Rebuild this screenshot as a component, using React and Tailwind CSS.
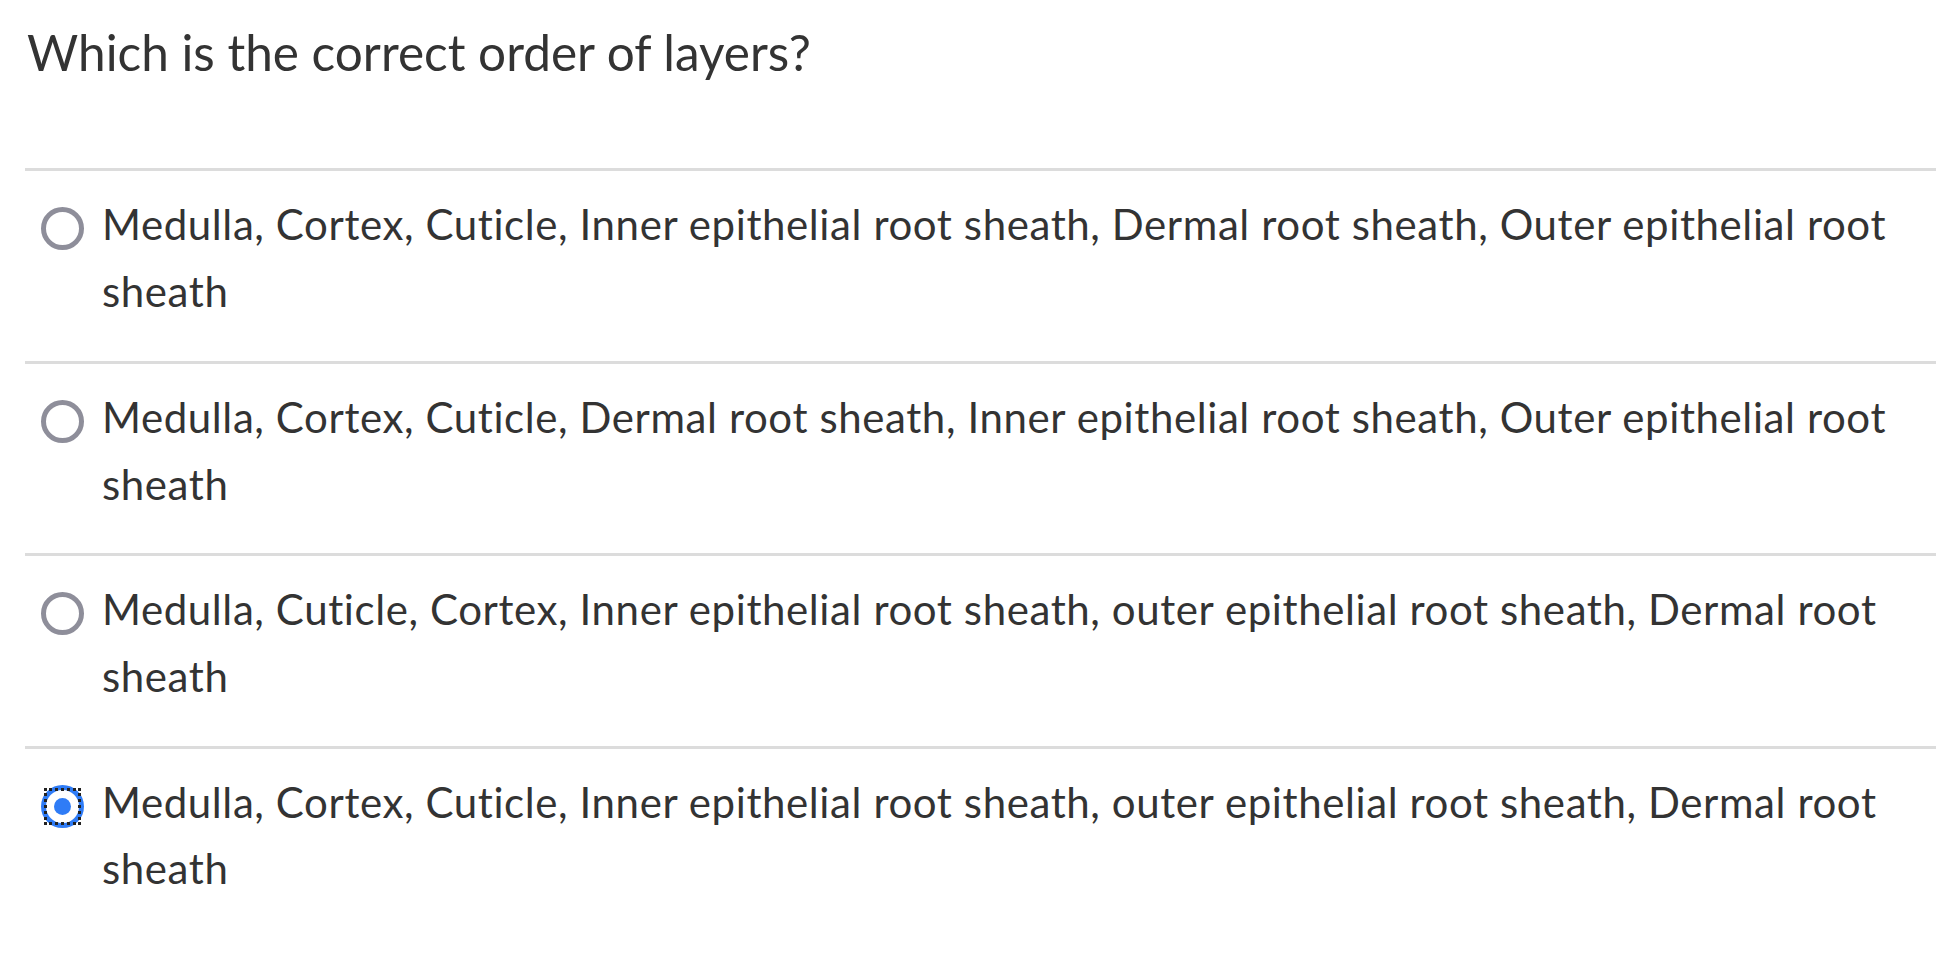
import React, { useState } from 'react';

const answers = [
  'Medulla, Cortex, Cuticle, Inner epithelial root sheath, Dermal root sheath, Outer epithelial root sheath',
  'Medulla, Cortex, Cuticle, Dermal root sheath, Inner epithelial root sheath, Outer epithelial root sheath',
  'Medulla, Cuticle, Cortex, Inner epithelial root sheath, outer epithelial root sheath, Dermal root sheath',
  'Medulla, Cortex, Cuticle, Inner epithelial root sheath, outer epithelial root sheath, Dermal root sheath',
];

function Radio({ checked }) {
  if (checked) {
    return (
      <span className="relative block w-[43px] h-[43px] shrink-0">
        <span className="absolute inset-0 rounded-full border-[5px] border-[#2f7cf6] bg-white" />
        <span className="absolute left-[13px] top-[13px] w-[17px] h-[17px] rounded-full bg-[#2f7cf6]" />
        <span className="absolute left-[3px] top-[3px] w-[37px] h-[37px] border-[3px] border-dotted border-[#222]" />
      </span>
    );
  }
  return <span className="block w-[43px] h-[43px] shrink-0 rounded-full border-[5px] border-[#8e8e9a] bg-white" />;
}

export default function App() {
  const [selected, setSelected] = useState(3);

  return (
    <div className="min-h-screen bg-white text-[#333] font-['Lato','Noto_Sans',sans-serif] pl-[25px] overflow-hidden">
      <h2 className="pt-[23px] pl-[2px] text-[49.5px] leading-[1.2] font-normal mb-[86px]">Which is the correct order of layers?</h2>
      <div>
        {answers.map((text, i) => (
          <label
            key={i}
            onClick={() => setSelected(i)}
            className="flex items-start border-t-[3px] border-[#dcdcdc] pt-[20px] pb-[36px] cursor-pointer"
          >
            <span className="pl-[16px] pt-[16px] pr-[18px]">
              <Radio checked={selected === i} />
            </span>
            <span className="text-[42px] leading-[66.7px] tracking-[0.6px] pr-[16px]">{text}</span>
          </label>
        ))}
      </div>
    </div>
  );
}
